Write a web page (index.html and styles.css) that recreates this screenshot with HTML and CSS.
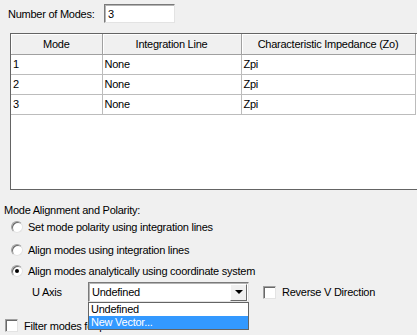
FILE: index.html
```html
<!DOCTYPE html>
<html lang="en">
<head>
    <meta charset="UTF-8">
    <title>Modes</title>
    <link rel="stylesheet" href="styles.css">
</head>
<body>
    <div class="dialog">
        <!-- number of modes -->
        <div class="top-row">
            <label class="top-label">Number of Modes:</label>
            <input class="text-input" type="text" value="3">
        </div>

        <!-- mode table -->
        <div class="grid-frame">
            <table class="grid">
                <colgroup>
                    <col class="col-mode">
                    <col class="col-line">
                    <col class="col-imp">
                    <col>
                </colgroup>
                <thead>
                    <tr>
                        <th>Mode</th>
                        <th>Integration Line</th>
                        <th>Characteristic Impedance (Zo)</th>
                        <th class="filler"></th>
                    </tr>
                </thead>
                <tbody>
                    <tr><td>1</td><td>None</td><td>Zpi</td><td class="filler"></td></tr>
                    <tr><td>2</td><td>None</td><td>Zpi</td><td class="filler"></td></tr>
                    <tr><td>3</td><td>None</td><td>Zpi</td><td class="filler"></td></tr>
                </tbody>
            </table>
        </div>

        <!-- alignment options -->
        <div class="section-label">Mode Alignment and Polarity:</div>

        <div class="radio-row first">
            <span class="radio"></span>
            <span>Set mode polarity using integration lines</span>
        </div>
        <div class="radio-row second">
            <span class="radio"></span>
            <span>Align modes using integration lines</span>
        </div>
        <div class="radio-row third">
            <span class="radio checked"></span>
            <span>Align modes analytically using coordinate system</span>
        </div>

        <div class="axis-row">
            <span class="axis-label">U Axis</span>
            <div class="combo">
                <span class="combo-value">Undefined</span>
                <span class="combo-button"><span class="arrow"></span></span>
                <ul class="combo-list">
                    <li>Undefined</li>
                    <li class="selected">New Vector...</li>
                </ul>
            </div>
            <span class="checkbox"></span>
            <span>Reverse V Direction</span>
        </div>

        <div class="filter-row">
            <span class="checkbox"></span>
            <span>Filter modes for port</span>
        </div>
    </div>
</body>
</html>
```

FILE: styles.css
```css
* {
    margin: 0;
    padding: 0;
    box-sizing: border-box;
}

body {
    width: 417px;
    height: 335px;
    overflow: hidden;
    background: #f0f0f0;
    font-family: "Liberation Sans", Arial, sans-serif;
    font-size: 11px;
    letter-spacing: -0.25px;
    color: #000;
}

.dialog {
    position: relative;
}

/* number of modes */
.top-row {
    display: flex;
    align-items: center;
    padding: 4px 0 0 8px;
}

.top-label {
    width: 96px;
}

.text-input {
    width: 71px;
    height: 19px;
    padding: 0 3px;
    font: inherit;
    background: #fff;
    border: 1px solid;
    border-color: #7a7a7a #e3e3e3 #e3e3e3 #7a7a7a;
    box-shadow: inset 1px 1px #b4b4b4;
    outline: none;
}

/* table */
.grid-frame {
    margin: 10px 0 0 10px;
    width: 420px;
    height: 157px;
    background: #fff;
    border: 1px solid #646464;
    overflow: hidden;
}

.grid {
    border-collapse: collapse;
    table-layout: fixed;
    width: 420px;
}

.col-mode { width: 91px; }
.col-line { width: 139px; }
.col-imp { width: 174px; }

.grid th {
    height: 20px;
    font-weight: normal;
    text-align: center;
    background: #f0f0f0;
    border-right: 1px solid #a0a0a0;
    border-bottom: 1px solid #a0a0a0;
    box-shadow: inset 1px 1px #fff;
    white-space: nowrap;
    overflow: hidden;
}

.grid td {
    height: 20px;
    padding: 0 2px;
    border-right: 1px solid #bcbcbc;
    border-bottom: 1px solid #bcbcbc;
    white-space: nowrap;
}

.grid th.filler {
    background: #fff;
    border: none;
    box-shadow: none;
}

.grid td.filler {
    border: none;
}

/* alignment options */
.section-label {
    margin: 14px 0 0 4px;
    line-height: 13px;
}

.radio-row {
    display: flex;
    align-items: center;
    height: 14px;
    padding-left: 11px;
    gap: 5px;
}

.radio-row.first { margin-top: 3px; }
.radio-row.second { margin-top: 9px; }
.radio-row.third { margin-top: 7px; }

.radio {
    position: relative;
    width: 12px;
    height: 12px;
    border-radius: 50%;
    background: #fff;
    border: 1px solid;
    border-color: #a0a0a0 #e3e3e3 #e3e3e3 #a0a0a0;
    box-shadow: inset 1px 1px #696969;
    flex-shrink: 0;
}

.radio.checked::after {
    content: "";
    position: absolute;
    left: 3px;
    top: 3px;
    width: 4px;
    height: 4px;
    border-radius: 50%;
    background: #000;
}

.axis-row {
    display: flex;
    align-items: center;
    margin-top: 4px;
    height: 20px;
    padding-left: 32px;
}

.axis-label {
    width: 56px;
}

.combo {
    position: relative;
    width: 161px;
    height: 20px;
    background: #fff;
    border: 1px solid;
    border-color: #7a7a7a #e3e3e3 #e3e3e3 #7a7a7a;
    box-shadow: inset 1px 1px #b4b4b4;
    display: flex;
    align-items: center;
    margin-right: 14px;
}

.combo-value {
    flex: 1;
    padding-left: 3px;
}

.combo-button {
    width: 17px;
    height: 17px;
    margin-right: 1px;
    background: #f0f0f0;
    border: 1px solid;
    border-color: #fff #696969 #696969 #fff;
    display: flex;
    align-items: center;
    justify-content: center;
}

.arrow {
    width: 0;
    height: 0;
    border-left: 4px solid transparent;
    border-right: 4px solid transparent;
    border-top: 4px solid #000;
}

/* dropdown list lies over the filter row */
.combo-list {
    position: absolute;
    left: -1px;
    top: 19px;
    width: 161px;
    list-style: none;
    background: #fff;
    border: 1px solid #646464;
    z-index: 2;
}

.combo-list li {
    height: 13px;
    line-height: 13px;
    padding-left: 2px;
}

.combo-list li.selected {
    background: #3399ff;
    color: #fff;
}

.checkbox {
    width: 13px;
    height: 13px;
    background: #fff;
    border: 1px solid;
    border-color: #a0a0a0 #e3e3e3 #e3e3e3 #a0a0a0;
    box-shadow: inset 1px 1px #696969;
    margin-right: 6px;
    flex-shrink: 0;
}

.filter-row {
    display: flex;
    align-items: center;
    margin-top: 17px;
    height: 13px;
    padding-left: 5px;
}
```
